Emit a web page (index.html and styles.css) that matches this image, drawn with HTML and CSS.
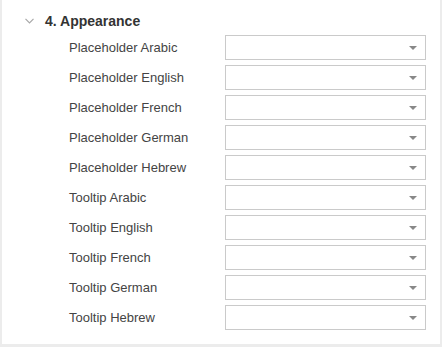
FILE: index.html
```html
<!DOCTYPE html>
<html>
<head>
<meta charset="utf-8">
<link rel="stylesheet" href="styles.css">
</head>
<body>
<div class="panel">
  <div class="group-header">
    <svg class="chevron" width="9" height="6" viewBox="0 0 9 6"><path d="M0.5 0.8 L4.5 4.8 L8.5 0.8" fill="none" stroke="#a8a8a8" stroke-width="1.2"/></svg>
    <span class="group-title">4. Appearance</span>
  </div>
  <div class="rows">
    <div class="row"><span class="label">Placeholder Arabic</span><div class="combo"><span class="arrow"></span></div></div>
    <div class="row"><span class="label">Placeholder English</span><div class="combo"><span class="arrow"></span></div></div>
    <div class="row"><span class="label">Placeholder French</span><div class="combo"><span class="arrow"></span></div></div>
    <div class="row"><span class="label">Placeholder German</span><div class="combo"><span class="arrow"></span></div></div>
    <div class="row"><span class="label">Placeholder Hebrew</span><div class="combo"><span class="arrow"></span></div></div>
    <div class="row"><span class="label">Tooltip Arabic</span><div class="combo"><span class="arrow"></span></div></div>
    <div class="row"><span class="label">Tooltip English</span><div class="combo"><span class="arrow"></span></div></div>
    <div class="row"><span class="label">Tooltip French</span><div class="combo"><span class="arrow"></span></div></div>
    <div class="row"><span class="label">Tooltip German</span><div class="combo"><span class="arrow"></span></div></div>
    <div class="row"><span class="label">Tooltip Hebrew</span><div class="combo"><span class="arrow"></span></div></div>
  </div>
</div>
</body>
</html>
```
FILE: styles.css
```css
html, body {
  margin: 0;
  padding: 0;
  background: #ececec;
}
body {
  width: 442px;
  height: 347px;
  overflow: hidden;
  font-family: "Liberation Sans", Arial, sans-serif;
}
.panel {
  margin-left: 2px;
  width: 438px;
  height: 344px;
  background: #fff;
  box-sizing: border-box;
}
.group-header {
  display: flex;
  align-items: center;
  padding-left: 23px;
  padding-top: 7px;
  height: 35px;
  box-sizing: border-box;
}
.chevron {
  display: block;
  margin-right: 11px;
}
.group-title {
  font-weight: bold;
  font-size: 14px;
  color: #333;
}
.rows {
  display: flex;
  flex-direction: column;
  gap: 5px;
}
.row {
  display: flex;
  align-items: center;
  height: 25px;
}
.label {
  width: 156px;
  padding-left: 67px;
  font-size: 13px;
  color: #444;
}
.combo {
  position: relative;
  width: 201px;
  height: 25px;
  box-sizing: border-box;
  border: 1px solid #cacaca;
  background: #fff;
}
.arrow {
  position: absolute;
  right: 8px;
  top: 10px;
  width: 0;
  height: 0;
  border-left: 4px solid transparent;
  border-right: 4px solid transparent;
  border-top: 4px solid #888;
}
```
